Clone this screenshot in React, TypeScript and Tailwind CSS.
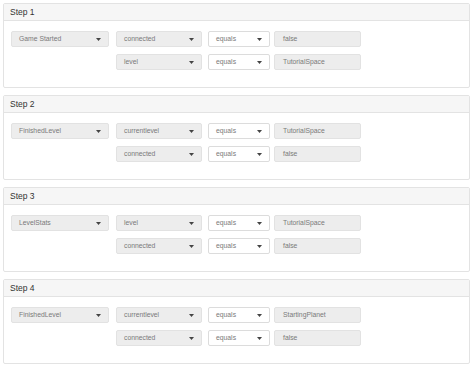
import React from "react";

type Row = { a?: string; b: string; c: string; d: string };
const steps: { title: string; rows: Row[] }[] = [
  { title: "Step 1", rows: [{ a: "Game Started", b: "connected", c: "equals", d: "false" }, { b: "level", c: "equals", d: "TutorialSpace" }] },
  { title: "Step 2", rows: [{ a: "FinishedLevel", b: "currentlevel", c: "equals", d: "TutorialSpace" }, { b: "connected", c: "equals", d: "false" }] },
  { title: "Step 3", rows: [{ a: "LevelStats", b: "level", c: "equals", d: "TutorialSpace" }, { b: "connected", c: "equals", d: "false" }] },
  { title: "Step 4", rows: [{ a: "FinishedLevel", b: "currentlevel", c: "equals", d: "StartingPlanet" }, { b: "connected", c: "equals", d: "false" }] },
];

function Caret() {
  return (
    <svg width="5" height="3" viewBox="0 0 5 3" className="shrink-0">
      <path d="M0 0 L5 0 L2.5 3 Z" fill="#444" />
    </svg>
  );
}

function Select({ text, w, white }: { text: string; w: string; white?: boolean }) {
  return (
    <div
      className={`${w} h-[16px] flex items-center justify-between pl-[7px] pr-[7px] border rounded-[2px] ${
        white ? "bg-white border-[#dcdcdc]" : "bg-[#ededed] border-[#e2e2e2]"
      }`}
    >
      <span className="text-[6.8px] text-[#7a7a7a] leading-none">{text}</span>
      <Caret />
    </div>
  );
}

export default function App() {
  return (
    <div
      className="w-[474px] h-[368px] bg-white pt-[3px] pl-[3px] pr-[4px] flex flex-col gap-[7px]"
      style={{ fontFamily: '"Liberation Sans", Arial, sans-serif' }}
    >
      {steps.map((s) => (
        <div key={s.title} className="h-[85px] border border-[#e3e3e3] rounded-[2px] flex flex-col">
          <div className="h-[17px] bg-[#f6f6f6] border-b border-[#e3e3e3] flex items-center pl-[6px] text-[8.5px] text-[#333]">
            {s.title}
          </div>
          <div className="pt-[10px] pl-[7px] flex flex-col gap-[7px]">
            {s.rows.map((r, i) => (
              <div key={i} className="flex items-center">
                <div className="w-[98px] mr-[7px]">{r.a ? <Select text={r.a} w="w-[98px]" /> : null}</div>
                <div className="mr-[6px]"><Select text={r.b} w="w-[86px]" /></div>
                <div className="mr-[4px]"><Select text={r.c} w="w-[62px]" white /></div>
                <div className="w-[87px] h-[16px] bg-[#ededed] border border-[#e2e2e2] rounded-[2px] flex items-center pl-[8px] text-[6.8px] text-[#7a7a7a] leading-none">
                  {r.d}
                </div>
              </div>
            ))}
          </div>
        </div>
      ))}
    </div>
  );
}
